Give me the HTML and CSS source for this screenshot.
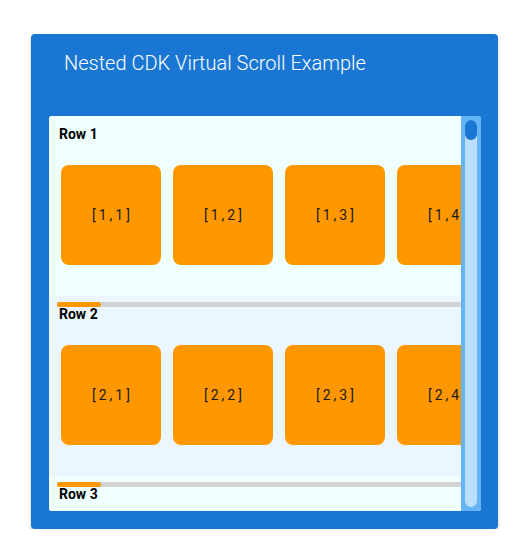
FILE: index.html
```html
<!DOCTYPE html>
<html lang="en">
<head>
  <meta charset="UTF-8">
  <meta name="viewport" content="width=device-width, initial-scale=1.0">
  <title>Nested CDK Virtual Scroll Example</title>
  <link rel="stylesheet" href="styles.css">
</head>
<body>

  <!-- Example card -->
  <div class="card">
    <h1 class="card-title">Nested CDK Virtual Scroll Example</h1>

    <!-- Outer (vertical) viewport -->
    <div class="viewport">
      <div class="rows">

        <div class="row">
          <div class="row-label">Row 1</div>
          <div class="tiles">
            <div class="tile">[1,1]</div>
            <div class="tile">[1,2]</div>
            <div class="tile">[1,3]</div>
            <div class="tile">[1,4]</div>
          </div>
          <div class="hbar"><div class="hbar-thumb"></div></div>
        </div>

        <div class="row">
          <div class="row-label">Row 2</div>
          <div class="tiles">
            <div class="tile">[2,1]</div>
            <div class="tile">[2,2]</div>
            <div class="tile">[2,3]</div>
            <div class="tile">[2,4]</div>
          </div>
          <div class="hbar"><div class="hbar-thumb"></div></div>
        </div>

        <div class="row">
          <div class="row-label">Row 3</div>
          <div class="tiles">
            <div class="tile">[3,1]</div>
            <div class="tile">[3,2]</div>
            <div class="tile">[3,3]</div>
            <div class="tile">[3,4]</div>
          </div>
          <div class="hbar"><div class="hbar-thumb"></div></div>
        </div>

      </div>

      <!-- Custom vertical scrollbar -->
      <div class="vbar">
        <div class="vbar-track">
          <div class="vbar-thumb"></div>
        </div>
      </div>
    </div>
  </div>

</body>
</html>
```

FILE: styles.css
```css
* {
  margin: 0;
  padding: 0;
  box-sizing: border-box;
  font-family: Roboto, 'Liberation Sans', sans-serif;
}

body {
  background: #fff;
  padding: 34px 0 0 31px;
}

.card {
  width: 467px;
  height: 495px;
  background: #1976d2;
  border-radius: 4px;
  box-shadow: 0 2px 3px rgba(0, 0, 0, 0.25);
  padding: 0 17px 18px 18px;
  display: flex;
  flex-direction: column;
}

.card-title {
  height: 82px;
  padding: 17px 0 0 15px;
  font-size: 20px;
  line-height: 24px;
  font-weight: 300;
  color: #fff;
}

.viewport {
  flex: 1;
  display: flex;
  border-radius: 3px;
  overflow: hidden;
  background: azure;
}

.rows {
  flex: 1;
  overflow: hidden;
}

.row {
  height: 180px;
  padding-top: 10px;
  background: azure;
}

.row:nth-child(even) {
  background: #ecf6fe;
}

.row-label {
  padding-left: 10px;
  font-size: 14px;
  line-height: 16px;
  font-weight: bold;
  color: #000;
}

.tiles {
  display: flex;
  gap: 12px;
  margin-top: 23px;
  padding-left: 12px;
  overflow: hidden;
}

.tile {
  flex: 0 0 100px;
  height: 100px;
  background: #ff9800;
  border-radius: 8px;
  display: flex;
  align-items: center;
  justify-content: center;
  font-size: 14px;
  letter-spacing: 3px;
  padding-left: 3px;
  color: #1a1a1a;
}

/* horizontal scrollbar sits over the top of the next row */
.hbar {
  position: relative;
  height: 5px;
  margin: 37px 0 0 8px;
  background: #d3d3d3;
}

.hbar-thumb {
  width: 44px;
  height: 5px;
  background: #ff9800;
  border-radius: 3px;
}

.vbar {
  flex: 0 0 20px;
  background: #64b5f6;
  padding: 4px;
  display: flex;
}

.vbar-track {
  flex: 1;
  background: #bbdefb;
  border-radius: 6px;
}

.vbar-thumb {
  height: 20px;
  background: #1976d2;
  border-radius: 6px;
}
```
